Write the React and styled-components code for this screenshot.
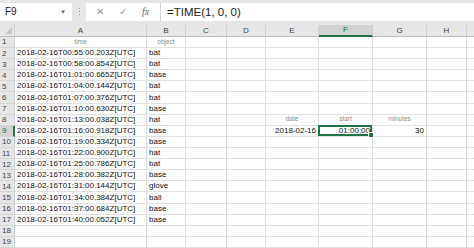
import styled, { createGlobalStyle } from "styled-components";

const GlobalStyle = createGlobalStyle`
  html, body {
    margin: 0;
    padding: 0;
    background: #e6e6e6;
    font-family: "Liberation Sans", Arial, sans-serif;
  }
`;

const Window = styled.div`
  width: 474px;
  height: 248px;
  overflow: hidden;
  background: #e6e6e6;
  display: flex;
  flex-direction: column;
`;

const FormulaBar = styled.div`
  display: flex;
  align-items: stretch;
  height: 19px;
  margin: 3px 0 4px 0;

  & > * {
    flex-shrink: 0;
  }
`;

const NameBox = styled.div`
  width: 72px;
  background: #fff;
  display: flex;
  align-items: center;
  justify-content: space-between;
  padding: 0 6px 0 5px;
  box-sizing: border-box;
  font-size: 10px;
  color: #222;
`;

const Caret = styled.span`
  font-size: 6px;
  color: #666;
`;

const Dots = styled.div`
  width: 14px;
  display: flex;
  flex-direction: column;
  align-items: center;
  justify-content: center;
  gap: 2px;

  span {
    width: 1px;
    height: 1px;
    background: #999;
  }
`;

const Buttons = styled.div`
  width: 74px;
  background: #fff;
  display: flex;
  align-items: center;
  gap: 15px;
  padding-left: 10px;
  box-sizing: border-box;
  color: #9a9a9a;
  font-size: 10px;
`;

const Fx = styled.span`
  font-family: "Liberation Serif", serif;
  font-style: italic;
  font-size: 10px;
  color: #666;
`;

const FormulaInput = styled.div`
  flex: 1 1 auto;
  background: #fff;
  border-left: 1px solid #d4d4d4;
  display: flex;
  align-items: center;
  padding-left: 6px;
  font-size: 11.5px;
  color: #222;
`;

const Sheet = styled.div`
  display: grid;
  grid-template-columns: 15px 132px 39px 41px 39px 53px 54px 54px 40px 60px;
  grid-template-rows: 12px repeat(19, 11.12px);
  background: #fff;
`;

const Corner = styled.div`
  background: #e6e6e6;
  border-right: 1px solid #cfcfcf;
  border-bottom: 1px solid #bdbdbd;
  box-sizing: border-box;
  position: relative;

  &::after {
    content: "";
    position: absolute;
    right: 2px;
    bottom: 2px;
    border-style: solid;
    border-width: 0 0 7px 7px;
    border-color: transparent transparent #c8c8c8 transparent;
  }
`;

const ColHeader = styled.div`
  background: ${(p) => (p.$active ? "#d2d2d2" : "#e6e6e6")};
  border-right: 1px solid #cfcfcf;
  border-bottom: ${(p) => (p.$active ? "2px solid #217346" : "1px solid #bdbdbd")};
  box-sizing: border-box;
  display: flex;
  align-items: center;
  justify-content: center;
  font-size: 8px;
  color: ${(p) => (p.$active ? "#217346" : "#444")};
`;

const RowHeader = styled.div`
  background: ${(p) => (p.$active ? "#d2d2d2" : "#e6e6e6")};
  border-right: ${(p) => (p.$active ? "2px solid #217346" : "1px solid #cfcfcf")};
  border-bottom: 1px solid #d6d6d6;
  box-sizing: border-box;
  display: flex;
  align-items: center;
  padding-left: 2px;
  font-size: 8px;
  color: ${(p) => (p.$active ? "#217346" : "#444")};
`;

const Cell = styled.div`
  position: relative;
  border-right: 1px solid #dcdcdc;
  border-bottom: 1px solid #e2e2e2;
  box-sizing: border-box;
  display: flex;
  align-items: center;
  justify-content: ${(p) =>
    p.$align === "right" ? "flex-end" : p.$align === "center" ? "center" : "flex-start"};
  padding: 0 2px;
  font-size: ${(p) => (p.$label ? "6.5px" : "8px")};
  color: ${(p) => (p.$label ? "#8a8a8a" : "#111")};
  white-space: nowrap;
  overflow: visible;
  line-height: 1;

  ${(p) =>
    p.$selected &&
    `
    &::after {
      content: "";
      position: absolute;
      left: -1px;
      top: -1px;
      right: 0;
      bottom: 0;
      border: 2px solid #217346;
    }
    &::before {
      content: "";
      position: absolute;
      right: -2px;
      bottom: -2px;
      width: 4px;
      height: 4px;
      background: #217346;
      border: 1px solid #fff;
      z-index: 2;
    }
  `}
`;

// the last column is only a sliver at the window's edge, so its letter is not shown
const columns = ["A", "B", "C", "D", "E", "F", "G", "H", ""];

const records = [
  ["2018-02-16T00:55:00.203Z[UTC]", "bat"],
  ["2018-02-16T00:58:00.854Z[UTC]", "bat"],
  ["2018-02-16T01:01:00.665Z[UTC]", "base"],
  ["2018-02-16T01:04:00.144Z[UTC]", "bat"],
  ["2018-02-16T01:07:00.376Z[UTC]", "bat"],
  ["2018-02-16T01:10:00.630Z[UTC]", "base"],
  ["2018-02-16T01:13:00.038Z[UTC]", "hat"],
  ["2018-02-16T01:16:00.918Z[UTC]", "base"],
  ["2018-02-16T01:19:00.334Z[UTC]", "base"],
  ["2018-02-16T01:22:00.900Z[UTC]", "hat"],
  ["2018-02-16T01:25:00.786Z[UTC]", "bat"],
  ["2018-02-16T01:28:00.382Z[UTC]", "base"],
  ["2018-02-16T01:31:00.144Z[UTC]", "glove"],
  ["2018-02-16T01:34:00.384Z[UTC]", "ball"],
  ["2018-02-16T01:37:00.684Z[UTC]", "base"],
  ["2018-02-16T01:40:00.052Z[UTC]", "base"],
];

// cells keyed by "row:col" -> { text, align, label }
function buildCells() {
  const cells = {
    "1:A": { text: "time", align: "center", label: true },
    "1:B": { text: "object", align: "center", label: true },
    "8:E": { text: "date", align: "center", label: true },
    "8:F": { text: "start", align: "center", label: true },
    "8:G": { text: "minutes", align: "center", label: true },
    "9:E": { text: "2018-02-16", align: "right" },
    "9:F": { text: "01:00:00", align: "right" },
    "9:G": { text: "30", align: "right" },
  };
  records.forEach(([time, object], i) => {
    cells[`${i + 2}:A`] = { text: time };
    cells[`${i + 2}:B`] = { text: object };
  });
  return cells;
}

const cells = buildCells();
const rows = Array.from({ length: 19 }, (_, i) => i + 1);

export default function App() {
  return (
    <Window>
      <GlobalStyle />
      <FormulaBar>
        <NameBox>
          F9
          <Caret>▼</Caret>
        </NameBox>
        <Dots>
          <span />
          <span />
          <span />
        </Dots>
        <Buttons>
          <span>✕</span>
          <span>✓</span>
          <Fx>fx</Fx>
        </Buttons>
        <FormulaInput>=TIME(1, 0, 0)</FormulaInput>
      </FormulaBar>
      <Sheet>
        <Corner />
        {columns.map((c, i) => (
          <ColHeader key={i} $active={c === "F"}>
            {c}
          </ColHeader>
        ))}
        {rows.map((r) => [
          <RowHeader key={`h${r}`} $active={r === 9}>
            {r}
          </RowHeader>,
          ...columns.map((c, i) => {
            const cell = cells[`${r}:${c}`];
            return (
              <Cell
                key={`${r}-${i}`}
                $align={cell?.align}
                $label={cell?.label}
                $selected={r === 9 && c === "F"}
              >
                {cell?.text}
              </Cell>
            );
          }),
        ])}
      </Sheet>
    </Window>
  );
}
